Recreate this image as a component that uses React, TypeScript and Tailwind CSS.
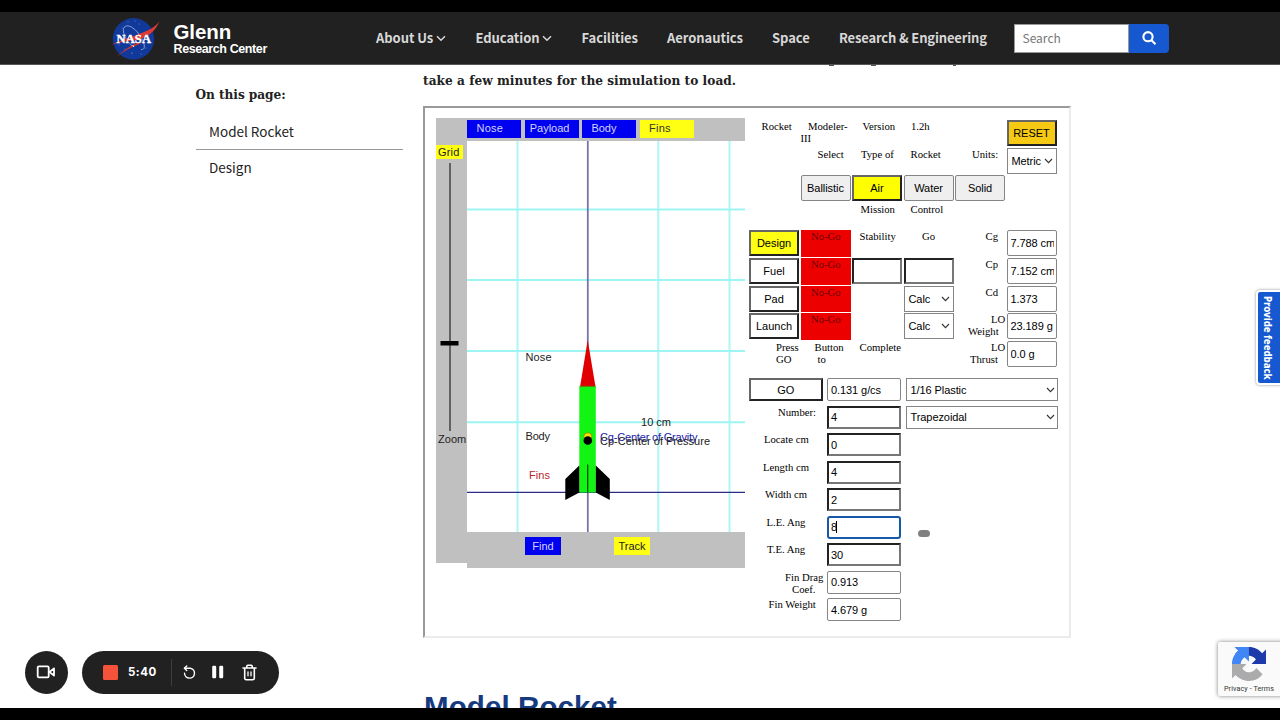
import React from "react";

const cyan = "#aef5f3";

function Chevron({ className = "" }: { className?: string }) {
  return (
    <svg className={className} width="9" height="6" viewBox="0 0 9 6" fill="none" stroke="#333" strokeWidth="1.100">
      <path d="M1 1l3.500 3.700L8 1" />
    </svg>
  );
}

function NasaLogo() {
  return (
    <svg width="54" height="46" viewBox="0 0 54 46" className="shrink-0">
      <circle cx="25.500" cy="23.800" r="20.700" fill="#11399a" />
      <g fill="#c9d4f0">
        <circle cx="14" cy="13" r=".4" /><circle cx="20" cy="7" r=".4" /><circle cx="31" cy="9" r=".4" />
        <circle cx="17" cy="34" r=".4" /><circle cx="24" cy="38" r=".5" /><circle cx="38" cy="33" r=".4" />
        <circle cx="11" cy="30" r=".4" /><circle cx="33" cy="39" r=".4" /><circle cx="27" cy="6" r=".4" />
      </g>
      <path d="M24 31C15 22 13 12.500 18 11C23 9.500 31 17 35 26C37 31 37 35 33 34.500" fill="none" stroke="#b9c6ea" strokeWidth=".7" />
      <path d="M51.500 6.500C47 16.500 40 22 31 24.500C21 26.500 10 27 3 30C12 25 23 22.500 31 19C40 15.500 46 13 51.500 6.500Z" fill="#dc3a34" />
      <path d="M9 41.500C16 35 22 31 31 27L33 28.500C25 31.500 17 35 9 41.500Z" fill="#c8352f" />
      <text x="8.500" y="28.300" fill="#fff" stroke="#fff" strokeWidth=".4" fontFamily="Liberation Serif, serif" fontWeight="700" fontSize="12.500" textLength="34.500" lengthAdjust="spacing">NASA</text>
      <path d="M24.500 30l1.500 2" stroke="#fff" strokeWidth="1" />
    </svg>
  );
}

function NavItem({ children, menu, className }: { children: React.ReactNode; menu?: boolean; className: string }) {
  return (
    <div className={`flex h-full shrink-0 items-center justify-between whitespace-nowrap ${className}`}>
      <span>{children}</span>
      {menu && (
        <svg width="10" height="7" viewBox="0 0 10 7" fill="none" stroke="#d8d8d8" strokeWidth="1.500">
          <path d="M1 1.200l4 4 4-4" />
        </svg>
      )}
    </div>
  );
}

function Header() {
  return (
    <header className="flex h-[53px] shrink-0 items-center border-b border-[#555] bg-[#212121] pl-[108px]">
      <NasaLogo />
      <div className="ml-[11.500px] w-[202.500px] pt-[2px] font-['Liberation_Sans',sans-serif] font-bold text-white">
        <div className="text-[20.500px] leading-[20px] tracking-[-0.1px]">Glenn</div>
        <div className="text-[12.500px] leading-[15px] tracking-[-0.4px]">Research Center</div>
      </div>
      <nav className="flex h-full w-[637.500px] shrink-0 text-[13px] font-bold tracking-[-0.05px] text-[#d8d8d8] font-['Noto_Sans_CJK_JP',sans-serif]">
        <NavItem menu className="mr-[29.500px] w-[70px]">About Us</NavItem>
        <NavItem menu className="mr-[30px] w-[76px]">Education</NavItem>
        <NavItem className="mr-[30px] w-[55.500px]">Facilities</NavItem>
        <NavItem className="mr-[30px] w-[75px]">Aeronautics</NavItem>
        <NavItem className="mr-[30px] w-[37px]">Space</NavItem>
        <NavItem className="w-[148px] tracking-[-0.15px]">Research &amp; Engineering</NavItem>
      </nav>
      <div className="flex h-[29px] shrink-0">
        <div className="flex w-[115px] items-center border border-[#999] bg-white pl-[8px] text-[12px] text-[#757575] font-['Noto_Sans_CJK_JP',sans-serif]">
          Search
        </div>
        <div className="flex w-[40px] items-center justify-center rounded-r-[4px] bg-[#1658d0]">
          <svg width="14" height="14" viewBox="0 0 14 14" fill="none" stroke="#fff" strokeWidth="2.100">
            <circle cx="6" cy="5.700" r="4.600" />
            <path d="M9.500 9.200l4 4" />
          </svg>
        </div>
      </div>
    </header>
  );
}

function Tab({ children, className }: { children: string; className: string }) {
  return <div className={`h-[18px] w-[54px] shrink-0 text-[11px] leading-[16px] ${className}`}>{children}</div>;
}

function RocketCanvas() {
  return (
    <div className="flex h-[450px] w-[309px] shrink-0 font-['Liberation_Sans',sans-serif] text-[#222]">
      <div className="flex h-[445px] w-[31px] flex-col bg-[#c0c0c0] pt-[27px]">
        <div className="h-[14px] w-[27px] bg-[#ffff14] pl-[2px] text-[11px] leading-[14px] tracking-[0.2px]">Grid</div>
        <svg width="31" height="272" viewBox="0 0 31 272" className="mt-[3px] shrink-0">
          <path d="M14 1v268" stroke="#222" strokeWidth="1.200" />
          <rect x="4.500" y="179" width="18" height="4.500" fill="#000" />
        </svg>
        <div className="-mt-px whitespace-nowrap pl-[2px] text-[11px] leading-[12px] tracking-[0.05px]">Zoom</div>
      </div>
      <div className="flex w-[278px] flex-col">
        <div className="flex h-[23px] shrink-0 gap-[3.700px] bg-[#c0c0c0] pt-[2px] text-[#d4d4ff]">
          <Tab className="bg-[#0000f0] pl-[9.500px] tracking-[0.2px]">Nose</Tab>
          <Tab className="bg-[#0000f0] pl-[5px]">Payload</Tab>
          <Tab className="bg-[#0000f0] pl-[9px]">Body</Tab>
          <Tab className="bg-[#ffff14] pl-[9px] text-[#333] tracking-[0.2px]">Fins</Tab>
        </div>
        <svg width="278" height="391" viewBox="467 141 278 391" className="shrink-0 bg-white" fontFamily="Liberation Sans, sans-serif" fontSize="11">
          <g stroke={cyan} strokeWidth="2">
            <path d="M517.500 141v391M658.300 141v391M729.500 141v391" />
            <path d="M467 209.500h278M467 280h278M467 351h278M467 422.300h278" stroke="#9df5f3" />
          </g>
          <path d="M587.800 141v391" stroke="#7b72ac" strokeWidth="1.800" />
          <path d="M467 492.400h278" stroke="#2c2c86" strokeWidth="1.200" />
          <path d="M587.700 340L580.200 386h15.200z" fill="#e00000" />
          <rect x="579.300" y="386" width="16.500" height="106.500" fill="#12f512" />
          <path d="M580 386.300h15.500" stroke="#806000" strokeWidth="1" />
          <path d="M579.300 465.500V492.500L565.300 500V479z M595.800 465.500V492.500L609.800 500V479z" fill="#000" />
          <path d="M587.700 464.500v28" stroke="#083a08" strokeWidth="1.200" />
          <circle cx="587.800" cy="436.800" r="4" fill="#ffe600" stroke="#8a6a00" strokeWidth=".6" />
          <circle cx="587.800" cy="440.500" r="4.300" fill="#000" />
          <g fill="#222">
            <text x="525.500" y="361" textLength="26">Nose</text>
            <text x="525.500" y="439.500" textLength="24.500">Body</text>
            <text x="529" y="478.500" fill="#b8282e" textLength="21">Fins</text>
            <text x="641" y="426" textLength="30">10 cm</text>
            <text x="600" y="440.500" fill="#2020a8" textLength="97.500">Cg-Center of Gravity</text>
            <text x="600" y="444.500" textLength="110">Cp-Center of Pressure</text>
          </g>
        </svg>
        <div className="flex h-[36px] shrink-0 bg-[#c0c0c0] pl-[58px] pt-[4.500px] text-[11px] leading-[18px]">
          <div className="h-[18px] w-[36px] bg-[#0000f0] text-center text-[#d4d4ff]">Find</div>
          <div className="ml-[53px] h-[18px] w-[36px] bg-[#ffff14] text-center">Track</div>
        </div>
      </div>
    </div>
  );
}

function Label({ children, className }: { children: string; className: string }) {
  return <div className={`whitespace-nowrap ${className}`}>{children}</div>;
}

function Btn({ children, className }: { children: string; className: string }) {
  return (
    <div className={`flex items-center justify-center whitespace-nowrap border-2 border-b-[#222] border-l-[#666] border-r-[#222] border-t-[#666] font-['Liberation_Sans',sans-serif] text-[11px] ${className}`}>
      {children}
    </div>
  );
}

function PlainBtn({ children }: { children: string }) {
  return (
    <div className="flex h-[26px] items-center justify-center rounded-[2px] border border-[#858585] bg-[#efefef] font-['Liberation_Sans',sans-serif] text-[11px] tracking-[-0.05px]">
      {children}
    </div>
  );
}

function Output({ children, className }: { children: string; className: string }) {
  return (
    <div className={`flex items-center overflow-hidden whitespace-nowrap rounded-[2px] border border-[#858585] bg-white pl-[3px] pr-[2px] font-['Liberation_Sans',sans-serif] text-[11px] tracking-[-0.08px] ${className}`}>
      <span className="overflow-hidden">{children}</span>
    </div>
  );
}

function Select({ children, className }: { children: string; className: string }) {
  return (
    <div className={`flex items-center justify-between border border-[#858585] bg-white font-['Liberation_Sans',sans-serif] text-[11px] tracking-[-0.08px] ${className}`}>
      {children}
      <Chevron />
    </div>
  );
}

function Field({ children }: { children: string }) {
  return (
    <div className="flex h-[23px] items-center border-2 border-b-[#777] border-l-[#222] border-r-[#777] border-t-[#222] bg-white pl-[2px] font-['Liberation_Sans',sans-serif] text-[11px]">
      {children}
    </div>
  );
}

function NoGo() {
  return <div className="h-[26.500px] bg-[#ec0000] pl-[10.500px] text-[#6e0000]">No-Go</div>;
}

function EmptyField() {
  return <div className="h-[26px] border-2 border-b-[#777] border-l-[#222] border-r-[#777] border-t-[#222] bg-white" />;
}

function MissionPanel() {
  return (
    <div className="grid auto-rows-[27.550px] grid-cols-[repeat(6,50px)] gap-x-[1.500px] leading-[12px]">
      <Label className="pl-[12.500px]">Rocket</Label>
      <div>
        <Label className="pl-[7.500px]">Modeler-</Label>
        <Label className="pl-0">III</Label>
      </div>
      <Label className="pl-[10.500px]">Version</Label>
      <Label className="pl-[7.500px]">1.2h</Label>
      <div />
      <Btn className="h-[26px] bg-[#f6c914]">RESET</Btn>

      <div />
      <Label className="pl-[17px]">Select</Label>
      <Label className="pl-[9px]">Type of</Label>
      <Label className="pl-[7px]">Rocket</Label>
      <Label className="pl-[17px]">Units:</Label>
      <Select className="h-[26px] pl-[4px] pr-[3px]">Metric</Select>

      <div />
      <PlainBtn>Ballistic</PlainBtn>
      <Btn className="h-[26px] bg-[#ffff00]">Air</Btn>
      <PlainBtn>Water</PlainBtn>
      <PlainBtn>Solid</PlainBtn>
      <div />

      <div />
      <div />
      <Label className="pl-[8.500px]">Mission</Label>
      <Label className="pl-[7px]">Control</Label>
      <div />
      <div />

      <Btn className="h-[26px] bg-[#ffff14]">Design</Btn>
      <NoGo />
      <Label className="pl-[7.500px]">Stability</Label>
      <Label className="pl-[18.500px]">Go</Label>
      <Label className="pl-[30.500px]">Cg</Label>
      <Output className="h-[26px]">7.788 cm</Output>

      <Btn className="h-[26px] bg-white">Fuel</Btn>
      <NoGo />
      <EmptyField />
      <EmptyField />
      <Label className="pl-[30.500px]">Cp</Label>
      <Output className="h-[26px]">7.152 cm</Output>

      <Btn className="h-[26px] bg-white">Pad</Btn>
      <NoGo />
      <div />
      <Select className="h-[26px] pl-[4px] pr-[3px]">Calc</Select>
      <Label className="pl-[30.500px]">Cd</Label>
      <Output className="h-[26px]">1.373</Output>

      <Btn className="h-[26px] bg-white">Launch</Btn>
      <NoGo />
      <div />
      <Select className="h-[26px] pl-[4px] pr-[3px]">Calc</Select>
      <div>
        <Label className="pl-[36px]">LO</Label>
        <Label className="pl-[13px]">Weight</Label>
      </div>
      <Output className="h-[26px]">23.189 g</Output>

      <div>
        <Label className="pl-[27px]">Press</Label>
        <Label className="pl-[27px]">GO</Label>
      </div>
      <div>
        <Label className="pl-[14px]">Button</Label>
        <Label className="pl-[17px]">to</Label>
      </div>
      <Label className="pl-[7.500px]">Complete</Label>
      <div />
      <div>
        <Label className="pl-[36px]">LO</Label>
        <Label className="pl-[15px]">Thrust</Label>
      </div>
      <Output className="h-[26px]">0.0 g</Output>
    </div>
  );
}

function FinPanel() {
  return (
    <div className="mt-[9.800px] grid auto-rows-[27.550px] grid-cols-[73.500px_74px_152px] gap-x-[4.500px] leading-[12px]">
      <Btn className="h-[23px] bg-white">GO</Btn>
      <Output className="h-[23px]">0.131 g/cs</Output>
      <Select className="h-[23px] pl-[4px] pr-[2px]">1/16 Plastic</Select>

      <Label className="pl-[29px]">Number:</Label>
      <Field>4</Field>
      <Select className="h-[23px] pl-[4px] pr-[2px]">Trapezoidal</Select>

      <Label className="pl-[15px]">Locate cm</Label>
      <Field>0</Field>
      <div />

      <Label className="pl-[14px]">Length cm</Label>
      <Field>4</Field>
      <div />

      <Label className="pl-[16px]">Width cm</Label>
      <Field>2</Field>
      <div />

      <Label className="pl-[17.500px]">L.E. Ang</Label>
      <div className="flex h-[23px] items-center rounded-[3px] border-2 border-[#1659a8] bg-white pl-[2px] font-['Liberation_Sans',sans-serif] text-[11px]">
        8<span className="-ml-px h-[12px] w-px bg-black" />
      </div>
      <div className="pl-[12.500px] pt-[14.500px]">
        <div className="h-[7px] w-[12px] rounded-full bg-[#808080]" />
      </div>

      <Label className="pl-[18px]">T.E. Ang</Label>
      <Field>30</Field>
      <div />

      <div>
        <Label className="pl-[36px]">Fin Drag</Label>
        <Label className="pl-[43px]">Coef.</Label>
      </div>
      <Output className="h-[23px]">0.913</Output>
      <div />

      <Label className="pl-[19.500px]">Fin Weight</Label>
      <Output className="h-[23px]">4.679 g</Output>
      <div />
    </div>
  );
}

function Recorder() {
  return (
    <div className="absolute left-[25px] top-[651px] flex gap-[14.500px]">
      <div className="flex h-[42.500px] w-[42.500px] items-center justify-center rounded-full bg-[#212121]">
        <svg width="20" height="14" viewBox="0 0 20 14" fill="none" stroke="#fff" strokeWidth="1.800" strokeLinejoin="round">
          <rect x="1.700" y="1.400" width="11" height="11" rx="1.200" />
          <path d="M13.500 7l4.500-3.600v7.200z" />
        </svg>
      </div>
      <div className="flex h-[42.500px] w-[197px] items-center rounded-full bg-[#212121] pl-[21px]">
        <div className="h-[15px] w-[15px] rounded-[1.500px] bg-[#f4523b]" />
        <div className="ml-[10px] w-[43px] pt-px font-['Inter',sans-serif] text-[11.500px] font-bold tracking-[0.5px] text-white">5:40</div>
        <div className="h-[27px] w-px bg-[#3d3d3d]" />
        <svg className="ml-[11px]" width="14" height="14" viewBox="0 0 14 14" fill="none" stroke="#fff" strokeWidth="1.400" strokeLinecap="round" strokeLinejoin="round">
          <path d="M1.600 3.200H7.200A5 5 0 1 1 1.500 8.300" />
          <path d="M3.700 .9L1.400 3.200l2.300 2.400" />
        </svg>
        <svg className="ml-[15px]" width="12" height="14" viewBox="0 0 12 14" fill="#fff">
          <rect x=".2" y=".8" width="4" height="12.400" rx="1.200" />
          <rect x="7.200" y=".8" width="4" height="12.400" rx="1.200" />
        </svg>
        <svg className="ml-[18px]" width="15" height="17" viewBox="0 0 15 17" fill="none" stroke="#fff" strokeWidth="1.600" strokeLinecap="round" strokeLinejoin="round">
          <path d="M1 4h13M2.700 4v10.200a1.500 1.500 0 0 0 1.500 1.500h6.600a1.500 1.500 0 0 0 1.500-1.500V4M4.800 4V2.300a1 1 0 0 1 1-1h3.400a1 1 0 0 1 1 1V4" />
          <path d="M6 7.800v4M9 7.800v4" strokeWidth="1.300" />
        </svg>
      </div>
    </div>
  );
}

function Feedback() {
  return (
    <div className="absolute left-[1256px] top-[290px] flex h-[95px] w-[30px] rounded-[4px] border-2 border-white bg-[#1658d0] pl-[3px] shadow-[0_0_3px_rgba(0,0,0,0.45)]">
      <span className="pt-[4px] font-['Noto_Sans',sans-serif] text-[9.700px] font-extrabold leading-[13px] tracking-[-0.06px] text-white [writing-mode:vertical-rl]">
        Provide feedback
      </span>
    </div>
  );
}

function Recaptcha() {
  return (
    <div className="absolute left-[1218px] top-[642px] flex h-[54px] w-[70px] flex-col rounded-[2px] bg-[#fafafa] pt-[5px] shadow-[0_0_4px_rgba(0,0,0,0.5)]">
      <svg className="ml-[14px]" width="34" height="34" viewBox="0 0 64 64">
        <path fill="#1c3aa9" d="M64 31.955l-.033-1.37V4.687l-7.16 7.16C50.948 4.674 42.033.093 32.050.093c-10.400 0-19.622 4.960-25.458 12.640l11.736 11.860a15.550 15.550 0 0 1 4.754-5.334c2.050-1.600 4.952-2.906 8.968-2.906.485 0 .860.057 1.135.163 4.976.393 9.288 3.140 11.828 7.124l-8.307 8.307L64 31.953" />
        <path fill="#4285f4" d="M31.862.094l-1.370.033H4.594l7.160 7.160C4.580 13.147 0 22.060 0 32.046c0 10.400 4.960 19.622 12.640 25.458L24.500 45.768a15.550 15.550 0 0 1-5.334-4.754c-1.600-2.050-2.906-4.952-2.906-8.968 0-.485.057-.860.163-1.135.393-4.976 3.140-9.288 7.124-11.828l8.307 8.307L31.860.095" />
        <path fill="#ababab" d="M.001 32.045l.033 1.370v25.898l7.160-7.160c5.860 7.173 14.774 11.754 24.760 11.754 10.400 0 19.622-4.960 25.458-12.640l-11.736-11.860a15.550 15.550 0 0 1-4.754 5.334c-2.050 1.600-4.952 2.906-8.968 2.906-.485 0-.860-.057-1.135-.163-4.976-.393-9.288-3.140-11.828-7.124l8.307-8.307c-10.522.040-22.400.066-27.295-.005" />
      </svg>
      <div className="ml-[6px] mt-[2.500px] whitespace-nowrap font-['Roboto',sans-serif] text-[7.200px] leading-[10px] tracking-[0.08px] text-[#333]">Privacy - Terms</div>
    </div>
  );
}

export default function App() {
  return (
    <div className="relative flex h-[720px] w-[1280px] flex-col overflow-hidden bg-white">
      <div className="h-[12px] shrink-0 bg-black" />
      <Header />
      <main className="flex min-h-0 flex-1 overflow-hidden">
        <aside className="w-[423px] shrink-0 pl-[195.500px] pt-[19.500px] text-[#222]">
          <h2 className="font-['DejaVu_Serif_Condensed','DejaVu_Serif',serif] text-[13.500px] font-bold leading-[18px] tracking-[-0.05px]">On this page:</h2>
          <ul className="w-[207px] pt-[11.500px] font-['Noto_Sans_CJK_JP',sans-serif] text-[13.500px] leading-[35px]">
            <li className="border-b border-[#999] pl-[13.500px]">Model Rocket</li>
            <li className="pl-[13.500px]">Design</li>
          </ul>
        </aside>
        <section className="w-[648px] shrink-0">
          <div className="flex h-[2px] items-start">
            <div className="ml-[406px] h-px w-[5px] bg-[#555]" />
            <div className="ml-[37px] h-px w-[5px] bg-[#555]" />
            <div className="ml-[77px] h-px w-[3px] bg-[#555]" />
          </div>
          <p className="h-[39px] whitespace-nowrap pt-[4px] font-['DejaVu_Serif_Condensed','DejaVu_Serif',serif] text-[13.500px] font-bold leading-[18px] tracking-[0.030px] text-[#222]">
            take a few minutes for the simulation to load.
          </p>
          <div className="flex h-[532px] border-2 border-b-[#ebebeb] border-l-[#9a9a9a] border-r-[#ebebeb] border-t-[#9a9a9a] bg-white pl-[11px] pt-[10px] text-black">
            <RocketCanvas />
            <div className="ml-[4px] pt-[2.300px] font-['Liberation_Serif',serif] text-[10.700px]">
              <MissionPanel />
              <FinPanel />
            </div>
          </div>
          <h2 className="mt-[54px] whitespace-nowrap pl-px font-['Liberation_Sans',sans-serif] text-[29.500px] font-bold leading-[30px] tracking-[0.1px] text-[#153a80]">Model Rocket</h2>
        </section>
      </main>
      <div className="h-[12px] shrink-0 bg-black" />
      <Feedback />
      <Recaptcha />
      <Recorder />
    </div>
  );
}
